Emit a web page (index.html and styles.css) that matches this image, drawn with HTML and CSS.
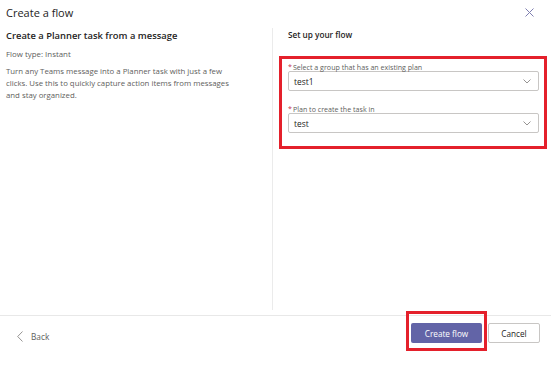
FILE: index.html
```html
<!DOCTYPE html>
<html lang="en">
<head>
    <meta charset="UTF-8">
    <meta name="viewport" content="width=device-width, initial-scale=1.0">
    <title>Create a flow</title>
    <link rel="stylesheet" href="styles.css">
</head>
<body>
    <div class="dialog">
        <div class="dialog-header">
            <h1>Create a flow</h1>
            <button type="button" class="close-btn" aria-label="Close">
                <svg width="9" height="9" viewBox="0 0 9 9"><path d="M0.5 0.5 L8.5 8.5 M8.5 0.5 L0.5 8.5" stroke="#7f7fb0" stroke-width="1" fill="none"/></svg>
            </button>
        </div>

        <div class="dialog-body">
            <div class="details">
                <h2>Create a Planner task from a message</h2>
                <p class="flow-type">Flow type: Instant</p>
                <p class="description">Turn any Teams message into a Planner task with just a few<br>clicks. Use this to quickly capture action items from messages<br>and stay organized.</p>
            </div>
            <div class="setup">
                <h3>Set up your flow</h3>
                <div class="highlight">
                    <label class="field-label"><span class="req">*</span>Select a group that has an existing plan</label>
                    <div class="select">
                        <span>test1</span>
                        <svg width="8" height="5" viewBox="0 0 8 5"><path d="M0.5 0.5 L4 4 L7.5 0.5" stroke="#8a8886" stroke-width="0.9" fill="none"/></svg>
                    </div>
                    <label class="field-label"><span class="req">*</span>Plan to create the task in</label>
                    <div class="select">
                        <span>test</span>
                        <svg width="8" height="5" viewBox="0 0 8 5"><path d="M0.5 0.5 L4 4 L7.5 0.5" stroke="#8a8886" stroke-width="0.9" fill="none"/></svg>
                    </div>
                </div>
            </div>
        </div>

        <div class="dialog-footer">
            <button type="button" class="back-btn">
                <svg width="6" height="11" viewBox="0 0 6 11"><path d="M5.5 0.5 L0.7 5.5 L5.5 10.5" stroke="#8a8886" stroke-width="0.9" fill="none"/></svg>
                <span>Back</span>
            </button>
            <div class="actions">
                <button type="button" class="btn btn-primary marked">Create flow</button>
                <button type="button" class="btn btn-default">Cancel</button>
            </div>
        </div>
    </div>
</body>
</html>
```

FILE: styles.css
```css
body {
    margin: 0;
    padding: 0;
    background-color: #ffffff;
    color: #252423;
    font-family: "Open Sans", "Noto Sans", sans-serif;
}

.dialog {
    width: 558px;
    height: 365px;
    display: flex;
    flex-direction: column;
}

.dialog-header {
    height: 24px;
    padding: 0 24px 4px 6px;
    display: flex;
    align-items: center;
    justify-content: space-between;
}

h1 {
    margin: 0;
    font-size: 11px;
    font-weight: 400;
    color: #252423;
}

.close-btn {
    background: none;
    border: none;
    padding: 0;
    display: flex;
}

.dialog-body {
    height: 287px;
    display: flex;
}

.details {
    width: 266px;
    margin-bottom: 5px;
    padding: 0 0 0 6px;
    border-right: 1px solid #ebebeb;
}

h2 {
    margin: 1px 0 0;
    font-size: 9.4px;
    font-weight: 600;
    line-height: 14px;
}

.flow-type {
    margin: 6px 0 0;
    font-size: 7.9px;
    line-height: 10px;
    color: #605e5c;
}

.description {
    margin: 6px 0 0;
    font-size: 7.8px;
    line-height: 12px;
    color: #605e5c;
}

.setup {
    flex: 1;
    padding: 0 11px 0 6px;
}

h3 {
    margin: 1px 0 0 9px;
    font-size: 8.2px;
    font-weight: 600;
    line-height: 12px;
}

/* red annotation boxes from the screenshot */
.highlight {
    margin-top: 15px;
    border: 3px solid #e4202b;
    padding: 4px 5px 13px 6px;
}

.field-label {
    display: block;
    font-size: 7.1px;
    line-height: 8px;
    color: #605e5c;
}

.req {
    color: #c4314b;
    margin-right: 1px;
}

.select {
    height: 18px;
    border: 1px solid #c8c6c4;
    border-radius: 2px;
    display: flex;
    align-items: center;
    justify-content: space-between;
    padding: 0 7px 0 5px;
    font-size: 8.4px;
    color: #252423;
}

.select + .field-label {
    margin-top: 14px;
}

.dialog-footer {
    flex: 1;
    border-top: 1px solid #e8e8e8;
    margin-right: 7px;
    display: flex;
    align-items: center;
    justify-content: space-between;
    padding: 0 11px 15px 17px;
}

.back-btn {
    background: none;
    border: none;
    padding: 0;
    margin-top: 6px;
    display: flex;
    align-items: center;
    gap: 8px;
    font-family: inherit;
    font-size: 8.3px;
    color: #605e5c;
}

.actions {
    display: flex;
    gap: 6px;
}

.btn {
    height: 20px;
    border-radius: 2px;
    font-family: inherit;
    font-size: 8.2px;
    padding: 0;
}

.btn-primary {
    width: 71px;
    background-color: #6264a7;
    color: #ffffff;
    border: none;
}

.btn-default {
    width: 52px;
    background-color: #ffffff;
    color: #252423;
    border: 1px solid #c8c6c4;
}

.marked {
    position: relative;
}

.marked::after {
    content: "";
    position: absolute;
    top: -12px;
    left: -5px;
    right: -5px;
    bottom: -8px;
    border: 3px solid #e4202b;
}
```
